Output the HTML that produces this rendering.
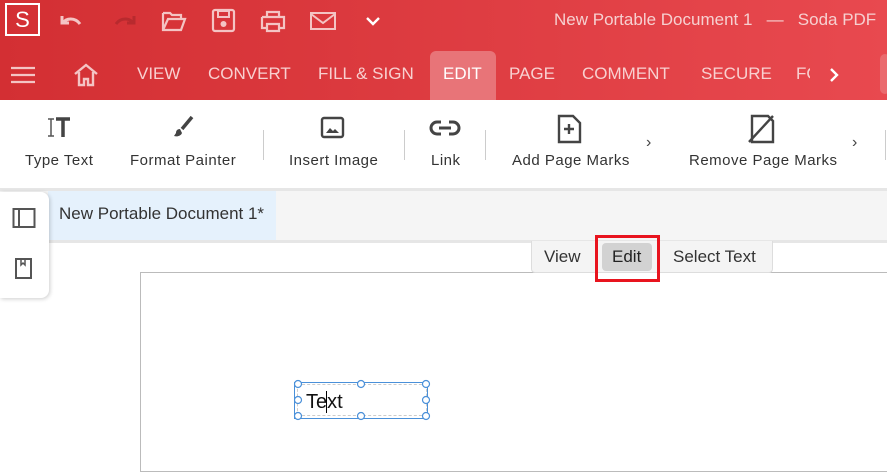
<!DOCTYPE html><html><head><style>
*{margin:0;padding:0;box-sizing:border-box}
body{width:887px;height:455px;overflow:hidden;background:#fff;font-family:"Liberation Sans",sans-serif;position:relative}
.hdr{position:absolute;left:0;top:0;width:887px;height:100px;background:linear-gradient(90deg,#d32f33,#e8494f)}
.a{position:absolute}
.tab{position:absolute;top:64px;color:#f8d0d0;font-size:17px}
.rb{position:absolute;top:152px;font-size:15px;color:#333;letter-spacing:0.5px}
.sep{position:absolute;top:130px;width:1px;height:30px;background:#ccc}
svg{position:absolute}
</style></head><body>
<div class="hdr"></div>
<div class="a" style="left:5px;top:3px;width:35px;height:33px;border:2px solid #fff;color:#fff;font-size:22px;text-align:center;line-height:29px">S</div>
<svg style="left:58px;top:12px" width="30" height="20" viewBox="0 0 30 20"><path d="M4 4v7h7M5 11c3-5 12-6 17 1" fill="none" stroke="#f4c4c4" stroke-width="3"/></svg>
<svg style="left:108px;top:12px" width="30" height="20" viewBox="0 0 30 20"><path d="M26 4v7h-7M25 11c-3-5-12-6-17 1" fill="none" stroke="#b82a2e" stroke-width="3"/></svg>
<svg style="left:160px;top:10px" width="28" height="24" viewBox="0 0 28 24"><path d="M3 3h7l2 2h9v4M3 3v17h18l4-11H8L3 20" fill="none" stroke="#f4c4c4" stroke-width="2.2"/></svg>
<svg style="left:211px;top:8px" width="26" height="26" viewBox="0 0 26 26"><rect x="2" y="2" width="21" height="21" rx="2" fill="none" stroke="#f4c4c4" stroke-width="2.2"/><rect x="7" y="3" width="11" height="6" fill="none" stroke="#f4c4c4" stroke-width="2"/><circle cx="12.5" cy="16" r="3" fill="#f4c4c4"/></svg>
<svg style="left:259px;top:9px" width="28" height="25" viewBox="0 0 28 25"><path d="M8 8V3h12v5M3 8h22v11h-4M7 19H3V8M8 15h12v7H8z" fill="none" stroke="#f4c4c4" stroke-width="2.2"/></svg>
<svg style="left:309px;top:11px" width="28" height="20" viewBox="0 0 28 20"><rect x="2" y="2" width="24" height="16" fill="none" stroke="#f4c4c4" stroke-width="2"/><path d="M2 3l12 9 12-9" fill="none" stroke="#f4c4c4" stroke-width="2"/></svg>
<svg style="left:364px;top:14px" width="18" height="14" viewBox="0 0 18 14"><path d="M3 4l6 6 6-6" fill="none" stroke="#fff" stroke-width="2.4"/></svg>
<div class="a" style="left:554px;top:10px;color:#f6d0d0;font-size:17px">New Portable Document 1&nbsp;&nbsp; —&nbsp;&nbsp; Soda PDF</div>
<svg style="left:10px;top:66px" width="26" height="18" viewBox="0 0 26 18"><path d="M1 2h24M1 9h24M1 16h24" stroke="#f4c4c4" stroke-width="2.2"/></svg>
<svg style="left:72px;top:62px" width="28" height="26" viewBox="0 0 28 26"><path d="M3 12L14 3l11 9M7 10v13h5v-6h4v6h5V10" fill="none" stroke="#f4c4c4" stroke-width="2.4"/></svg>
<div class="tab" style="left:137px">VIEW</div>
<div class="tab" style="left:208px">CONVERT</div>
<div class="tab" style="left:318px">FILL &amp; SIGN</div>
<div class="a" style="left:430px;top:51px;width:66px;height:49px;background:#e87478;border-radius:6px 6px 0 0"></div>
<div class="tab" style="left:443px;color:#fff">EDIT</div>
<div class="tab" style="left:509px">PAGE</div>
<div class="tab" style="left:582px">COMMENT</div>
<div class="tab" style="left:701px">SECURE</div>
<div class="tab" style="left:796px;width:14px;overflow:hidden">FO</div>
<svg style="left:828px;top:66px" width="14" height="18" viewBox="0 0 14 18"><path d="M3 3l6 6-6 6" fill="none" stroke="#fff" stroke-width="2.4"/></svg>
<div class="a" style="left:880px;top:54px;width:10px;height:40px;background:#ea6a6e;border-radius:6px"></div>
<svg style="left:46px;top:117px" width="26" height="22" viewBox="0 0 26 22"><path d="M2 2h6M5 2v17M2 19h6" stroke="#555" stroke-width="1.5" fill="none"/><path d="M10 2h14M17 2v18" stroke="#444" stroke-width="3.5"/></svg>
<svg style="left:170px;top:115px" width="26" height="26" viewBox="0 0 26 26"><path d="M22 2l-10 12" stroke="#444" stroke-width="3.5"/><path d="M10 14c-3 0-4 2-4 4l-2 3c3 1 7 0 8-3z" fill="#444"/></svg>
<svg style="left:320px;top:116px" width="26" height="24" viewBox="0 0 26 24"><rect x="2" y="2" width="21" height="19" rx="2" fill="none" stroke="#444" stroke-width="2.4"/><path d="M6 17l4-5 3 3 2-2 4 4z" fill="#444"/></svg>
<svg style="left:429px;top:118px" width="32" height="20" viewBox="0 0 32 20"><path d="M12 4H8a6 6 0 000 12h4M20 4h4a6 6 0 010 12h-4M10 10h12" fill="none" stroke="#444" stroke-width="3"/></svg>
<svg style="left:556px;top:114px" width="28" height="30" viewBox="0 0 28 30"><path d="M3 2h14l7 7v19H3z" fill="none" stroke="#444" stroke-width="2.4"/><path d="M13 10v10M8 15h10" stroke="#444" stroke-width="2.4"/></svg>
<svg style="left:747px;top:114px" width="30" height="30" viewBox="0 0 30 30"><path d="M5 2h16l5 5v21H5z" fill="none" stroke="#444" stroke-width="2.4"/><path d="M26 2L2 28" stroke="#444" stroke-width="2.4"/></svg>
<div class="rb" style="left:25px">Type Text</div>
<div class="rb" style="left:130px">Format Painter</div>
<div class="sep" style="left:263px"></div>
<div class="rb" style="left:289px">Insert Image</div>
<div class="sep" style="left:404px"></div>
<div class="rb" style="left:431px">Link</div>
<div class="sep" style="left:485px"></div>
<div class="rb" style="left:512px">Add Page Marks</div>
<div class="a" style="left:646px;top:134px;font-size:16px;color:#444">›</div>
<div class="rb" style="left:689px">Remove Page Marks</div>
<div class="a" style="left:852px;top:134px;font-size:16px;color:#444">›</div>
<div class="sep" style="left:885px"></div>
<div class="a" style="left:0;top:188px;width:887px;height:3px;background:#e6e6e6"></div>
<div class="a" style="left:0;top:191px;width:887px;height:49px;background:#f5f5f5"></div>
<div class="a" style="left:48px;top:191px;width:228px;height:49px;background:#e5f1fc"></div>
<div class="a" style="left:59px;top:204px;font-size:17px;color:#333">New Portable Document 1*</div>
<div class="a" style="left:0;top:240px;width:887px;height:3px;background:#e6e6e6"></div>
<div class="a" style="left:0;top:192px;width:49px;height:106px;background:#fff;border-radius:0 8px 8px 0;box-shadow:1px 1px 4px rgba(0,0,0,.2)"></div>
<svg style="left:12px;top:207px" width="24" height="22" viewBox="0 0 24 22"><rect x="1.5" y="2" width="21" height="18" fill="none" stroke="#555" stroke-width="2"/><path d="M7 2v18" stroke="#555" stroke-width="2"/></svg>
<svg style="left:14px;top:257px" width="20" height="24" viewBox="0 0 20 24"><rect x="2" y="2" width="15" height="19" fill="none" stroke="#555" stroke-width="2"/><path d="M7 2v6l2-2 2 2V2" fill="none" stroke="#555" stroke-width="1.5"/></svg>
<div class="a" style="left:140px;top:272px;width:760px;height:200px;border:1px solid #bbb"></div>
<div class="a" style="left:531px;top:241px;width:242px;height:32px;background:#f4f4f4;border:1px solid #ddd;border-top:none;border-radius:0 0 4px 4px"></div>
<div class="a" style="left:544px;top:247px;font-size:17px;color:#333">View</div>
<div class="a" style="left:602px;top:243px;width:50px;height:28px;background:#d2d2d2;border-radius:4px"></div>
<div class="a" style="left:612px;top:247px;font-size:17px;color:#222">Edit</div>
<div class="a" style="left:673px;top:247px;font-size:17px;color:#333">Select Text</div>
<div class="a" style="left:595px;top:235px;width:65px;height:47px;border:3px solid #e8141e"></div>
<div class="a" style="left:297px;top:384px;width:130px;height:32px;border:1px dashed #ccc"></div>
<div class="a" style="left:294px;top:382px;width:134px;height:37px;border:1px solid #4a90d9"></div>
<div class="a" style="left:306px;top:391px;font-size:20px;color:#111">Te<span style="border-left:1px solid #000;margin-left:-1px"></span>xt</div>
<svg style="left:290px;top:377px" width="145" height="47" viewBox="0 0 145 47"><g fill="#fff" stroke="#4a90d9" stroke-width="1.2"><circle cx="8" cy="7" r="3.5"/><circle cx="71" cy="7" r="3.5"/><circle cx="136" cy="7" r="3.5"/><circle cx="8" cy="23" r="3.5"/><circle cx="136" cy="23" r="3.5"/><circle cx="8" cy="39" r="3.5"/><circle cx="71" cy="39" r="3.5"/><circle cx="136" cy="39" r="3.5"/></g></svg>
</body></html>
